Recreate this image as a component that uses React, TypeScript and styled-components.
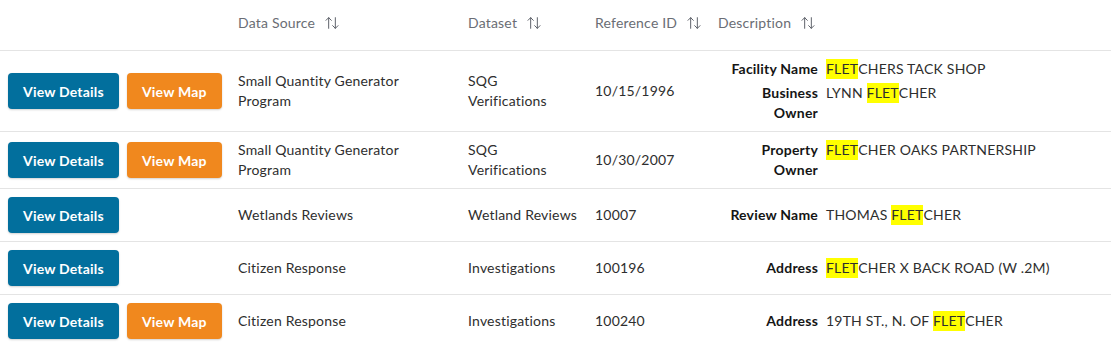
import React from "react";
import styled, { createGlobalStyle } from "styled-components";
import { ArrowUpDown } from "lucide-react";

const Global = createGlobalStyle`
  html, body { margin: 0; padding: 0; background: #fff; }
  body { font-family: Lato, "Noto Sans", sans-serif; -webkit-font-smoothing: antialiased; }
`;

const Table = styled.table`
  width: 1111px;
  border-collapse: collapse;
  table-layout: fixed;
  font-size: 14px;
  line-height: 20px;
  letter-spacing: 0.2px;
  color: #2e2e2e;
`;

const Th = styled.th`
  text-align: left;
  font-weight: 400;
  color: #6a6d74;
  padding: 13px 8px 17px;
  border-bottom: 1px solid #e4e4e4;
  white-space: nowrap;
`;

const HeadInner = styled.span`
  display: inline-flex;
  align-items: center;
  gap: 9px;
`;

const Tr = styled.tr`
  &:not(:last-child) td { border-bottom: 1px solid #e4e4e4; }
`;

const Td = styled.td`
  padding: 8px;
  vertical-align: middle;
`;

const Actions = styled.div`
  display: flex;
  gap: 8px;
`;

const Button = styled.button<{ $variant: "blue" | "orange" }>`
  height: 36px;
  padding: 0 15px;
  border: none;
  border-radius: 4px;
  font-family: Lato, "Noto Sans", sans-serif;
  font-size: 14px;
  letter-spacing: 0.2px;
  font-weight: 700;
  color: #fff;
  background: ${(p) => (p.$variant === "blue" ? "#026f9d" : "#f0881e")};
  box-shadow: 0 1px 2px rgba(0, 0, 0, 0.18);
  white-space: nowrap;
  cursor: pointer;
`;

const DescGrid = styled.div`
  display: grid;
  grid-template-columns: 100px 1fr;
  column-gap: 8px;
  row-gap: 4px;
`;

const Label = styled.div`
  font-weight: 700;
  text-align: right;
  color: #151515;
`;

const Value = styled.div`
  color: #2e2e2e;
`;

const Mark = styled.mark`
  background: #ffff00;
  color: inherit;
  display: inline-block;
  line-height: 20px;
`;

function hl(text: string) {
  const parts = text.split("FLET");
  const out: React.ReactNode[] = [];
  parts.forEach((p, i) => {
    out.push(p);
    if (i < parts.length - 1) out.push(<Mark key={i}>FLET</Mark>);
  });
  return out;
}

type Row = {
  map: boolean;
  source: string;
  dataset: string;
  ref: string;
  desc: [string, string][];
};

const rows: Row[] = [
  {
    map: true,
    source: "Small Quantity Generator Program",
    dataset: "SQG Verifications",
    ref: "10/15/1996",
    desc: [
      ["Facility Name", "FLETCHERS TACK SHOP"],
      ["Business Owner", "LYNN FLETCHER"],
    ],
  },
  {
    map: true,
    source: "Small Quantity Generator Program",
    dataset: "SQG Verifications",
    ref: "10/30/2007",
    desc: [["Property Owner", "FLETCHER OAKS PARTNERSHIP"]],
  },
  {
    map: false,
    source: "Wetlands Reviews",
    dataset: "Wetland Reviews",
    ref: "10007",
    desc: [["Review Name", "THOMAS FLETCHER"]],
  },
  {
    map: false,
    source: "Citizen Response",
    dataset: "Investigations",
    ref: "100196",
    desc: [["Address", "FLETCHER X BACK ROAD (W .2M)"]],
  },
  {
    map: true,
    source: "Citizen Response",
    dataset: "Investigations",
    ref: "100240",
    desc: [["Address", "19TH ST., N. OF FLETCHER"]],
  },
];

const Head = ({ children }: { children: React.ReactNode }) => (
  <Th>
    <HeadInner>
      {children}
      <ArrowUpDown size={16} strokeWidth={1.5} color="#5f636b" />
    </HeadInner>
  </Th>
);

export default function App() {
  return (
    <>
      <Global />
      <Table>
        <colgroup>
          <col style={{ width: 230 }} />
          <col style={{ width: 230 }} />
          <col style={{ width: 127 }} />
          <col style={{ width: 123 }} />
          <col />
        </colgroup>
        <thead>
          <tr>
            <Th />
            <Head>Data Source</Head>
            <Head>Dataset</Head>
            <Head>Reference ID</Head>
            <Head>Description</Head>
          </tr>
        </thead>
        <tbody>
          {rows.map((r, i) => (
            <Tr key={i}>
              <Td>
                <Actions>
                  <Button $variant="blue">View Details</Button>
                  {r.map && <Button $variant="orange">View Map</Button>}
                </Actions>
              </Td>
              <Td>{r.source}</Td>
              <Td>{r.dataset}</Td>
              <Td>{r.ref}</Td>
              <Td>
                <DescGrid>
                  {r.desc.map(([l, v]) => (
                    <React.Fragment key={l}>
                      <Label>{l}</Label>
                      <Value>{hl(v)}</Value>
                    </React.Fragment>
                  ))}
                </DescGrid>
              </Td>
            </Tr>
          ))}
        </tbody>
      </Table>
    </>
  );
}
